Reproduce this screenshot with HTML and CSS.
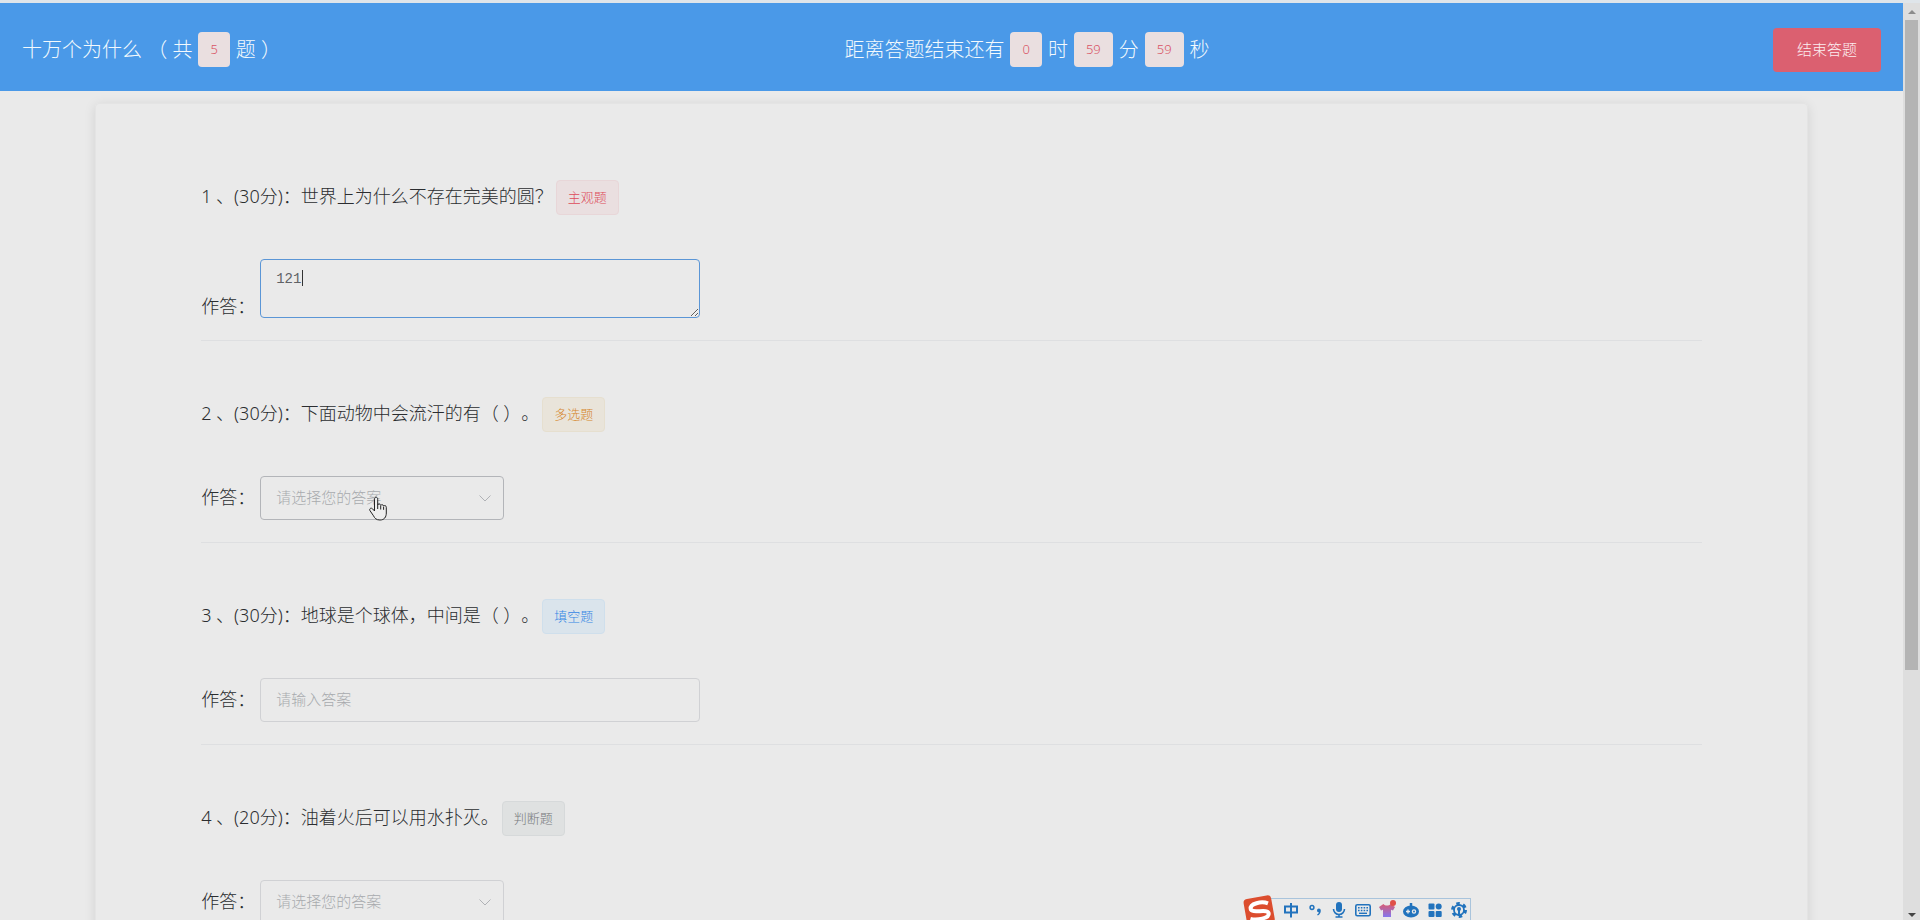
FILE: index.html
```html
<!DOCTYPE html>
<html lang="zh-CN">
<head>
  <meta charset="UTF-8">
  <title>十万个为什么</title>
  <link rel="stylesheet" href="styles.css">
</head>

<body>
  <div class="window">
    <div class="page">
      <!-- 顶部栏 -->
      <header class="top-bar">
        <div class="bar-text">十万个为什么 （ 共 <span class="count">5</span> 题 ）</div>
        <div class="bar-text">距离答题结束还有 <span class="count">0</span> 时 <span class="count">59</span> 分 <span class="count">59</span> 秒</div>
        <button type="button" class="finish-btn">结束答题</button>
      </header>

      <!-- 试题 -->
      <main class="paper">
        <section class="question">
          <div class="title">1 、(30分)：世界上为什么不存在完美的圆？ <span class="tag tag-danger">主观题</span></div>
          <div class="answer answer-area">
            <label for="answer1">作答：</label>
            <div class="field">
              <textarea id="answer1" class="control">121</textarea>
              <span class="caret"></span>
            </div>
          </div>
        </section>

        <section class="question">
          <div class="title">2 、(30分)：下面动物中会流汗的有（ ）。 <span class="tag tag-warning">多选题</span></div>
          <div class="answer">
            <label for="answer2">作答：</label>
            <div class="field">
              <select id="answer2" class="control hovered">
                <option>请选择您的答案</option>
              </select>
              <svg class="arrow" viewBox="0 0 14 14"><path d="M1.5 4.5 7 10l5.500-5.500"/></svg>
              <svg class="pointer" viewBox="0 0 20 25"><path d="M6.500 15V3.200c0-2.600 3.200-2.600 3.200 0V9c.4-1.500 2.900-1.300 3 .5.500-1.300 2.700-1 2.900.6.800-1 2.700-.6 2.700 1.200V17c0 4-2 7-6.300 7-4 0-5.200-1.800-6.500-4.200L2 14.700c-1.200-2 1.300-3.400 2.600-1.800z"/><path d="M9.700 9v4M12.700 10v3.500M15.600 10.800v3"/></svg>
            </div>
          </div>
        </section>

        <section class="question">
          <div class="title">3 、(30分)：地球是个球体，中间是（ ）。 <span class="tag tag-primary">填空题</span></div>
          <div class="answer">
            <label for="answer3">作答：</label>
            <input type="text" id="answer3" class="control" placeholder="请输入答案">
          </div>
        </section>

        <section class="question">
          <div class="title">4 、(20分)：油着火后可以用水扑灭。 <span class="tag tag-info">判断题</span></div>
          <div class="answer">
            <label for="answer4">作答：</label>
            <div class="field">
              <select id="answer4" class="control">
                <option>请选择您的答案</option>
              </select>
              <svg class="arrow" viewBox="0 0 14 14"><path d="M1.5 4.500 7 10l5.500-5.500"/></svg>
            </div>
          </div>
        </section>
      </main>
    </div>

    <!-- 滚动条 -->
    <div class="scrollbar">
      <svg viewBox="0 0 8 4"><path d="M0 4 4 0l4 4z" fill="#8c8c8c"/></svg>
      <div class="track"><div class="thumb"></div></div>
      <svg viewBox="0 0 8 4"><path d="M0 0h8L4 4z" fill="#444"/></svg>
    </div>
  </div>

  <!-- 输入法 -->
  <div class="ime">
    <svg class="ime-logo" viewBox="0 0 32 28"><g transform="rotate(-10 16 14)"><rect x="2" y="1" width="28" height="28" rx="4" fill="#dc4d2e"/><path d="M26 9C20 5.500 8 6 8 11.500c0 5.500 17 2 17 7.500 0 5-13 5-19 2.200" fill="none" stroke="#fff" stroke-width="4"/></g></svg>
    <svg viewBox="0 0 16 16"><path d="M2 4.500h12v6H2zM8 1v14.500" fill="none" stroke="#2273bd" stroke-width="2"/></svg>
    <svg viewBox="0 0 16 16"><circle cx="5" cy="5.500" r="1.900" fill="none" stroke="#2273bd" stroke-width="1.500"/><path d="M10 8.500a1.900 1.900 0 0 1 3.800 0c0 2.500-1.200 4-3 5l-.7-1c1.200-.7 1.600-1.400 1.700-2.300-1 .1-1.800-.6-1.800-1.700z" fill="#2273bd"/></svg>
    <svg viewBox="0 0 16 16"><rect x="5" y="0" width="6" height="10" rx="3" fill="#2273bd"/><path d="M2.500 7a5.500 5.500 0 0 0 11 0M8 12.500V15M4.500 15h7" fill="none" stroke="#2273bd" stroke-width="1.600"/></svg>
    <svg viewBox="0 0 16 16"><rect x=".8" y="2.800" width="14.400" height="11" rx="1.500" fill="none" stroke="#2273bd" stroke-width="1.600"/><path d="M3 5.800h10M3 8.500h10" stroke="#2273bd" stroke-width="1.600" stroke-dasharray="1.600 1.200"/><path d="M4 11.300h8" stroke="#2273bd" stroke-width="1.400"/></svg>
    <svg viewBox="0 0 16 16"><defs><linearGradient id="shirt" x1="0" y1="0" x2="0" y2="1"><stop offset="0" stop-color="#d85b73"/><stop offset="1" stop-color="#8577ee"/></linearGradient></defs><path d="M4.500 2c1.500 2 5.500 2 7 0L16 5l-2 3.500-2-.8V15H4V7.700l-2 .8L0 5z" fill="url(#shirt)"/><circle cx="14" cy="1" r="3" fill="#e04f47"/></svg>
    <svg viewBox="0 0 16 16"><path d="M8 1v3" stroke="#2273bd" stroke-width="2.500"/><ellipse cx="8" cy="9.500" rx="8" ry="6" fill="#2273bd"/><path d="M3 9.500h4M5 7.500v4" stroke="#eaeaea" stroke-width="1.400"/><circle cx="11" cy="9.500" r="1.600" fill="none" stroke="#eaeaea" stroke-width="1.300"/></svg>
    <svg viewBox="0 0 16 16" fill="#2273bd"><rect x="1.500" y="1.500" width="6" height="6" rx="1"/><circle cx="11.700" cy="4.500" r="3"/><rect x="1.500" y="9" width="6" height="6" rx="1"/><rect x="8.700" y="9" width="6" height="6" rx="1"/></svg>
    <svg viewBox="0 0 16 16"><circle cx="8" cy="8" r="6.500" fill="none" stroke="#2273bd" stroke-width="3" stroke-dasharray="3.400 3.400"/><circle cx="8" cy="8" r="5" fill="none" stroke="#2273bd" stroke-width="1.800"/><circle cx="8" cy="7" r="2" fill="#2273bd"/><path d="M8 8v6" stroke="#2273bd" stroke-width="2"/></svg>
  </div>
</body>
</html>
```
FILE: styles.css
```css
* {
  box-sizing: border-box;
}

body {
  margin: 0;
  background-color: #eaeaea;
  color: #2b2d30;
  font-family: "Noto Sans", "Noto Sans CJK SC", sans-serif;
  font-size: 18px;
  font-weight: 300;
  text-spacing-trim: space-all;
}

button, input, select, textarea {
  font: inherit;
}

.window {
  display: flex;
  height: 100vh;
  border-top: 3px solid #dfe5ea;
  overflow: hidden;
}

.page {
  flex: 1;
  overflow: hidden;
}

/* 顶部栏 */
.top-bar {
  display: flex;
  align-items: center;
  justify-content: space-between;
  height: 88px;
  padding: 5px 22px 0;
  background-color: #4a99e8;
  color: #f3f9fd;
}

.bar-text {
  display: flex;
  align-items: center;
  gap: 6px;
  font-size: 20px;
  line-height: 32px;
  white-space: nowrap;
}

.count {
  height: 35px;
  padding: 0 12px;
  border-radius: 4px;
  background-color: #eadfe0;
  color: #d95465;
  font-size: 13px;
  line-height: 35px;
}

.finish-btn {
  height: 44px;
  padding: 0 24px 2px;
  border: 0;
  border-radius: 4px;
  background-color: #db6070;
  color: #fbeef0;
  font-size: 15px;
}

/* 试题 */
.paper {
  width: 90%;
  margin: 12px auto 0;
  padding: 20px 105px;
  border: 1px solid #e4e4e4;
  border-radius: 4px;
  box-shadow: 0 2px 12px rgba(0, 0, 0, 0.1);
}

.question {
  padding: 56px 0 22px;
  border-bottom: 1px solid #dedfe1;
}

.title {
  display: flex;
  align-items: flex-start;
  gap: 3px;
  margin-bottom: 44px;
  line-height: 32px;
}

.tag {
  height: 35px;
  padding: 0 11px;
  border: 1px solid;
  border-radius: 4px;
  font-size: 13px;
  line-height: 33px;
}

.tag-danger {
  background-color: #eadfe0;
  border-color: #e8d6d8;
  color: #dd4c5a;
}

.tag-warning {
  background-color: #e9e4da;
  border-color: #e6dfcf;
  color: #d6862c;
}

.tag-primary {
  background-color: #dae4ec;
  border-color: #cfdfec;
  color: #3586e4;
}

.tag-info {
  background-color: #dfe1e1;
  border-color: #d6d9da;
  color: #77797c;
}

.answer {
  display: flex;
  align-items: center;
  gap: 5px;
}

.answer label {
  padding-bottom: 4px;
}

.answer-area {
  align-items: flex-end;
}

.answer-area label {
  padding-bottom: 0;
}

.field {
  position: relative;
  display: flex;
}

.control {
  width: 440px;
  height: 44px;
  padding: 0 15px 2px;
  border: 1px solid #d0d1d4;
  border-radius: 4px;
  outline: none;
  background-color: transparent;
  color: #606266;
  font-size: 15px;
}

.control::placeholder {
  color: #a8aaae;
  opacity: 1;
}

textarea.control {
  height: 59px;
  padding: 7px 15px;
  border-color: #5b96d6;
  font-family: "Liberation Mono", monospace;
  font-size: 14px;
  line-height: 24px;
}

select.control {
  width: 244px;
  appearance: none;
  color: #a8aaae;
}

select.hovered {
  border-color: #b3b5b9;
}

.arrow {
  position: absolute;
  top: 15px;
  right: 12px;
  width: 14px;
  height: 14px;
  fill: none;
  stroke: #b0b2b6;
}

.caret {
  position: absolute;
  top: 11px;
  left: 42px;
  width: 1px;
  height: 16px;
  background-color: #333;
}

.pointer {
  position: absolute;
  top: 20px;
  left: 108px;
  width: 20px;
  height: 25px;
  fill: #eee;
  stroke: #222;
}

/* 滚动条 */
.scrollbar {
  display: flex;
  flex-direction: column;
  align-items: center;
  width: 17px;
  padding: 7px 0 3px;
  background-color: #dedede;
}

.scrollbar svg {
  width: 8px;
  height: 4px;
}

.track {
  flex: 1;
  width: 13px;
  margin: 6px 0 14px;
}

.thumb {
  height: 74%;
  background-color: #b4b4b4;
}

/* 输入法 */
.ime {
  position: fixed;
  right: 449px;
  bottom: 0;
  display: flex;
  align-items: center;
  gap: 8px;
  width: 216px;
  height: 22px;
  padding-right: 4px;
  border: 1px solid #a9c4dc;
  border-width: 1px 1px 0 0;
}

.ime svg {
  flex: none;
  width: 16px;
  height: 16px;
  overflow: visible;
}

.ime .ime-logo {
  width: 32px;
  height: 28px;
  margin-left: -12px;
}
```
